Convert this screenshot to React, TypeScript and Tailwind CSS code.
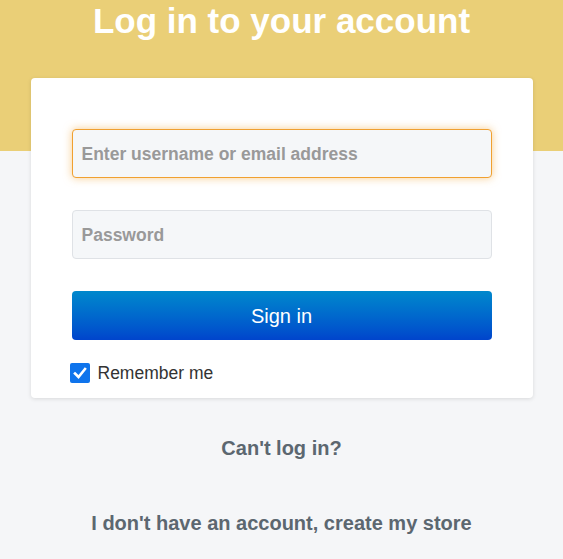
import React from "react";

export default function App() {
  return (
    <div
      className="min-h-[559px] w-full bg-[#f5f6f8]"
      style={{ fontFamily: '"Liberation Sans", Arial, sans-serif' }}
    >
      <div className="h-[151px] bg-[#eacf77] pt-[1px]">
        <h1 className="text-center text-[35px] font-bold leading-[40px] text-white">
          Log in to your account
        </h1>
      </div>
      <div className="-mt-[73px] mx-auto w-[502px] rounded-[4px] bg-white px-[41px] pt-[51px] pb-[14px] shadow-[0_1px_4px_rgba(0,0,0,0.12)]">
        <input
          type="text"
          placeholder="Enter username or email address"
          autoFocus
          className="block h-[49px] w-[420px] rounded-[4px] border border-[#f0a030] bg-[#f5f7f9] px-[9px] pt-[1px] text-[17.5px] font-bold text-[#333] caret-[#b00000] shadow-[0_0_8px_rgba(240,160,48,0.55)] outline-none placeholder:text-[#999]"
        />
        <input
          type="password"
          placeholder="Password"
          className="mt-[32px] block h-[49px] w-[420px] rounded-[4px] border border-[#dfe2e6] bg-[#f5f7f9] px-[9px] pt-[1px] text-[17.5px] font-bold text-[#333] outline-none placeholder:text-[#999]"
        />
        <button className="mt-[32px] flex h-[49px] w-[420px] items-center justify-center rounded-[4px] bg-gradient-to-b from-[#0088cc] to-[#0044cc] pt-[1px] text-[20px] text-white">
          Sign in
        </button>
        <label className="mt-[22px] -ml-[2px] flex items-center gap-[8px]">
          <span className="flex h-[20px] w-[20px] items-center justify-center rounded-[2px] bg-[#0f74ec]">
            <svg width="14" height="14" viewBox="0 0 14 14">
              <path
                d="M2 7.5 L5.5 11 L12 3"
                fill="none"
                stroke="white"
                strokeWidth="2.6"
                strokeLinecap="square"
              />
            </svg>
          </span>
          <span className="text-[17.5px] leading-[22px] text-[#333]">Remember me</span>
        </label>
      </div>
      <div className="mt-[38px] text-center text-[20px] font-bold leading-[24px] text-[#5c6770]">
        Can't log in?
      </div>
      <div className="mt-[51px] text-center text-[20px] font-bold leading-[24px] text-[#5c6770]">
        I don't have an account, create my store
      </div>
    </div>
  );
}
